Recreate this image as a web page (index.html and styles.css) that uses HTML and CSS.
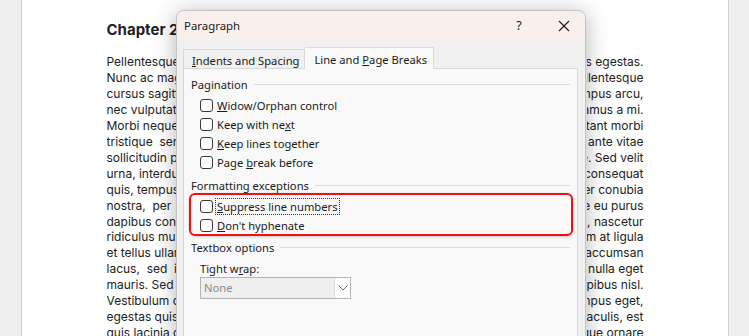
FILE: index.html
```html
<!DOCTYPE html>
<html lang="en">
<head>
    <meta charset="UTF-8">
    <title>Paragraph</title>
    <link rel="stylesheet" href="styles.css">
</head>
<body>
    <div class="workspace">
        <div class="gutter"></div>
        <div class="page">
            <h2 class="chapter">Chapter 2</h2>
            <div class="body-text">
                <div class="line"><span class="start">Pellentesque habitant</span><span class="end"><span>turpis egestas.</span></span></div>
                <div class="line"><span class="start">Nunc ac magna vitae</span><span class="end"><span>dui pellentesque</span></span></div>
                <div class="line"><span class="start">cursus sagittis. Sed</span><span class="end"><span>Fusce tempus arcu,</span></span></div>
                <div class="line"><span class="start">nec vulputate tellus</span><span class="end"><span>luctus. Vivamus a mi.</span></span></div>
                <div class="line"><span class="start">Morbi neque lorem,</span><span class="end"><span>habitant morbi</span></span></div>
                <div class="line"><span class="start">tristique  senectus</span><span class="end"><span>varius ante vitae</span></span></div>
                <div class="line"><span class="start">sollicitudin porta,</span><span class="end"><span>neque. Sed velit</span></span></div>
                <div class="line"><span class="start">urna, interdum non</span><span class="end"><span>non consequat</span></span></div>
                <div class="line"><span class="start">quis, tempus eleifend</span><span class="end"><span>torquent per conubia</span></span></div>
                <div class="line"><span class="start">nostra,  per  inceptos</span><span class="end"><span>molestie eu purus</span></span></div>
                <div class="line"><span class="start">dapibus congue. Orci</span><span class="end"><span>montes, nascetur</span></span></div>
                <div class="line"><span class="start">ridiculus mus. Mauris</span><span class="end"><span>dictum at ligula</span></span></div>
                <div class="line"><span class="start">et tellus ullamcorper,</span><span class="end"><span>mi accumsan</span></span></div>
                <div class="line"><span class="start">lacus,  sed  imperdiet</span><span class="end"><span>libero nulla eget</span></span></div>
                <div class="line"><span class="start">mauris. Sed quis dolor</span><span class="end"><span>Nam dapibus nisl.</span></span></div>
                <div class="line"><span class="start">Vestibulum consectetur</span><span class="end"><span>Integer tempus eget,</span></span></div>
                <div class="line"><span class="start">egestas quis vehicula</span><span class="end"><span>sed iaculis, est</span></span></div>
                <div class="line"><span class="start">quis lacinia dignissim,</span><span class="end"><span>neque augue ornare</span></span></div>
            </div>
        </div>
        <div class="gutter"></div>
    </div>

    <div class="dialog">
        <div class="titlebar">
            <span class="title">Paragraph</span>
            <span class="help">?</span>
            <span class="close">
                <svg width="12" height="12" viewBox="0 0 12 12"><path d="M1 1L11 11M11 1L1 11" stroke="#1a1a1a" stroke-width="1.1" fill="none"/></svg>
            </span>
        </div>
        <div class="dialog-body">
            <div class="tabs">
                <div class="tab"><u>I</u>ndents and Spacing</div>
                <div class="tab active">Line and <u>P</u>age Breaks</div>
            </div>
            <div class="panel">
                <div class="group-title">Pagination</div>
                <div class="checks">
                    <label class="check"><span class="box"></span><span><u>W</u>idow/Orphan control</span></label>
                    <label class="check"><span class="box"></span><span>Keep with ne<u>x</u>t</span></label>
                    <label class="check"><span class="box"></span><span><u>K</u>eep lines together</span></label>
                    <label class="check"><span class="box"></span><span>Page <u>b</u>reak before</span></label>
                </div>
                <div class="group-title">Formatting exceptions</div>
                <div class="checks highlighted">
                    <label class="check"><span class="box"></span><span class="focused"><u>S</u>uppress line numbers</span></label>
                    <label class="check"><span class="box"></span><span><u>D</u>on't hyphenate</span></label>
                </div>
                <div class="group-title">Textbox options</div>
                <div class="field">
                    <div class="field-label">Tight w<u>r</u>ap:</div>
                    <div class="select">
                        <span class="select-value">None</span>
                        <span class="select-arrow">
                            <svg width="10" height="6" viewBox="0 0 10 6"><path d="M0.5 0.5L5 5L9.5 0.5" stroke="#6d6d6d" stroke-width="1" fill="none"/></svg>
                        </span>
                    </div>
                </div>
            </div>
        </div>
    </div>
</body>
</html>
```

FILE: styles.css
```css
body {
    margin: 0;
    background: #efefef;
    overflow: hidden;
}

.workspace {
    display: flex;
    height: 336px;
}
.gutter {
    flex: 1;
}
.page {
    flex: 0 0 708px;
    box-sizing: border-box;
    padding: 20px 0 0 85px;
    background: #fff;
    border-left: 1px solid #d2d2d2;
    border-right: 1px solid #d2d2d2;
    font-family: Inter, "Liberation Sans", sans-serif;
    color: #222;
}
.chapter {
    margin: 0 0 14px;
    font-size: 15px;
    line-height: 20px;
    font-weight: 700;
}
.body-text {
    width: 537px;
    font-size: 12px;
    line-height: 15.95px;
}
/* only the ends of each line show beside the dialog */
.line {
    display: flex;
    justify-content: space-between;
    white-space: pre;
}
.line > .start {
    width: 70px;
    overflow: hidden;
}
.line > .end {
    display: flex;
    justify-content: flex-end;
    width: 57px;
    overflow: hidden;
}

/* dialog */
.dialog {
    position: absolute;
    left: 176px;
    top: 10px;
    width: 410px;
    height: 340px;
    box-sizing: border-box;
    border: 1px solid #c4c4c4;
    border-radius: 8px 8px 0 0;
    background: #f0f0f0;
    box-shadow: 0 3px 22px rgba(0, 0, 0, .3);
    overflow: hidden;
    font-family: "Noto Sans", sans-serif;
    font-size: 11.2px;
    color: #1a1a1a;
}
.titlebar {
    display: flex;
    align-items: center;
    height: 29px;
    padding-left: 7px;
    background: #f9efed;
}
.title {
    flex: 1;
    font-size: 11.4px;
}
.help {
    width: 14px;
    text-align: center;
    font-size: 12.5px;
    margin-right: 32px;
}
.close {
    display: flex;
    margin-right: 15px;
}

.dialog-body {
    padding: 7px 7px 0 6px;
}
.tabs {
    display: flex;
    align-items: flex-end;
    height: 21px;
}
.tab {
    height: 19px;
    line-height: 18px;
    padding: 2px 5px 0 8px;
    box-sizing: border-box;
    border: 1px solid #d9d9d9;
    border-bottom: none;
    white-space: nowrap;
}
.tab.active {
    height: 22px;
    margin-bottom: -1px;
    padding: 3px 6px 0 9px;
    background: #f9f9f9;
    border-left: none;
}
.panel {
    height: 300px;
    box-sizing: border-box;
    padding: 7.5px 7px 0 7px;
    background: #f9f9f9;
    border: 1px solid #d9d9d9;
}
.group-title {
    display: flex;
    align-items: center;
    height: 16px;
    white-space: nowrap;
}
.group-title::after {
    content: "";
    flex: 1;
    height: 1px;
    margin-left: 6px;
    background: #dcdcdc;
}

.checks {
    display: flex;
    flex-direction: column;
    padding: 3.5px 0 5px 9px;
}
.checks.highlighted {
    padding-top: 3.5px;
}
.check {
    display: flex;
    align-items: center;
    gap: 4px;
    height: 19px;
    white-space: nowrap;
}
.box {
    width: 11px;
    height: 11px;
    border: 1px solid #3a3a3a;
    border-radius: 3px;
    background: #fdfdfd;
}
.focused {
    outline: 1px dotted #333;
    padding: 0 1px;
    margin-left: -1px;
    line-height: 15px;
}
.highlighted {
    position: relative;
}
.highlighted::before {
    content: "";
    position: absolute;
    left: -2px;
    right: -3px;
    top: 0;
    bottom: 4px;
    border: 2px solid #f01010;
    border-radius: 6px;
    box-shadow: 0 1px 3px rgba(0, 0, 0, .2);
}

.field {
    padding: 4px 0 0 9px;
}
.field-label {
    height: 17px;
    line-height: 17px;
}
.select {
    display: flex;
    width: 151px;
    height: 22px;
    box-sizing: border-box;
    border: 1px solid #b4b4b4;
    background: #efefef;
}
.select-value {
    flex: 1;
    padding-left: 3px;
    line-height: 20px;
    color: #8a8a8a;
}
.select-arrow {
    display: flex;
    align-items: center;
    justify-content: center;
    width: 15px;
    background: #fff;
    border-left: 1px solid #e2e2e2;
}
```
